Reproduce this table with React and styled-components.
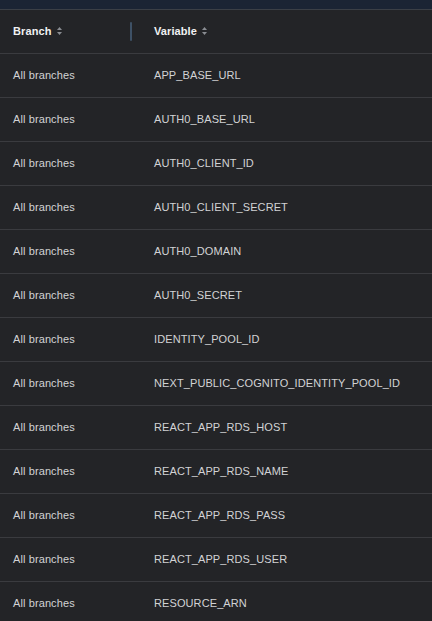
import React from 'react';
import styled, {createGlobalStyle} from 'styled-components';

const variables = [
    'APP_BASE_URL',
    'AUTH0_BASE_URL',
    'AUTH0_CLIENT_ID',
    'AUTH0_CLIENT_SECRET',
    'AUTH0_DOMAIN',
    'AUTH0_SECRET',
    'IDENTITY_POOL_ID',
    'NEXT_PUBLIC_COGNITO_IDENTITY_POOL_ID',
    'REACT_APP_RDS_HOST',
    'REACT_APP_RDS_NAME',
    'REACT_APP_RDS_PASS',
    'REACT_APP_RDS_USER',
    'RESOURCE_ARN',
];

const SortIcon = ()=>(
    <svg width="7" height="10" viewBox="0 0 7 10">
        <path d="M3.5 1 L6 4 H1 Z" fill="#8a8d93"/>
        <path d="M3.5 9 L6 6 H1 Z" fill="#8a8d93"/>
    </svg>
);

const App = ()=>{
    return (
        <>
            <Global/>
            <Page>
                <TopBar/>
                <Table>
                    <HeaderRow>
                        <HeadCell $divider>Branch <SortIcon/></HeadCell>
                        <HeadCell>Variable <SortIcon/></HeadCell>
                    </HeaderRow>
                    {variables.map(v=>(
                        <Row key={v}>
                            <Cell>All branches</Cell>
                            <Cell>{v}</Cell>
                        </Row>
                    ))}
                </Table>
            </Page>
        </>
    );
}

const Global = createGlobalStyle`
    body{
        margin:0;
        background:#232427;
        font-family:'Liberation Sans', Arial, sans-serif;
    }
`;

const Page = styled.div`
    width:432px;
    height:621px;
    overflow:hidden;
    background:#232427;
`;

const TopBar = styled.div`
    height:9px;
    background:#1b2434;
    border-bottom:1px solid #3b3f46;
`;

const Table = styled.div`
    display:flex;
    flex-direction:column;
`;

const Row = styled.div`
    display:grid;
    grid-template-columns:141px 1fr;
    height:44px;
    border-bottom:1px solid #3a3b3f;
    box-sizing:border-box;
    &:last-child{
        border-bottom:none;
    }
`;

const HeaderRow = styled(Row)`
    height:44px;
`;

const Cell = styled.div`
    display:flex;
    align-items:center;
    padding:0 0 2px 13px;
    font-size:11px;
    color:#d2d3d5;
    letter-spacing:0.1px;
`;

const HeadCell = styled(Cell)`
    position:relative;
    gap:4px;
    font-weight:bold;
    color:#f0f1f2;

    ${p=>p.$divider && `
        &::after{
            content:'';
            position:absolute;
            right:9px;
            top:12px;
            width:2px;
            height:19px;
            background:#3e5166;
            border-radius:1px;
        }
    `}
`;

export default App;
